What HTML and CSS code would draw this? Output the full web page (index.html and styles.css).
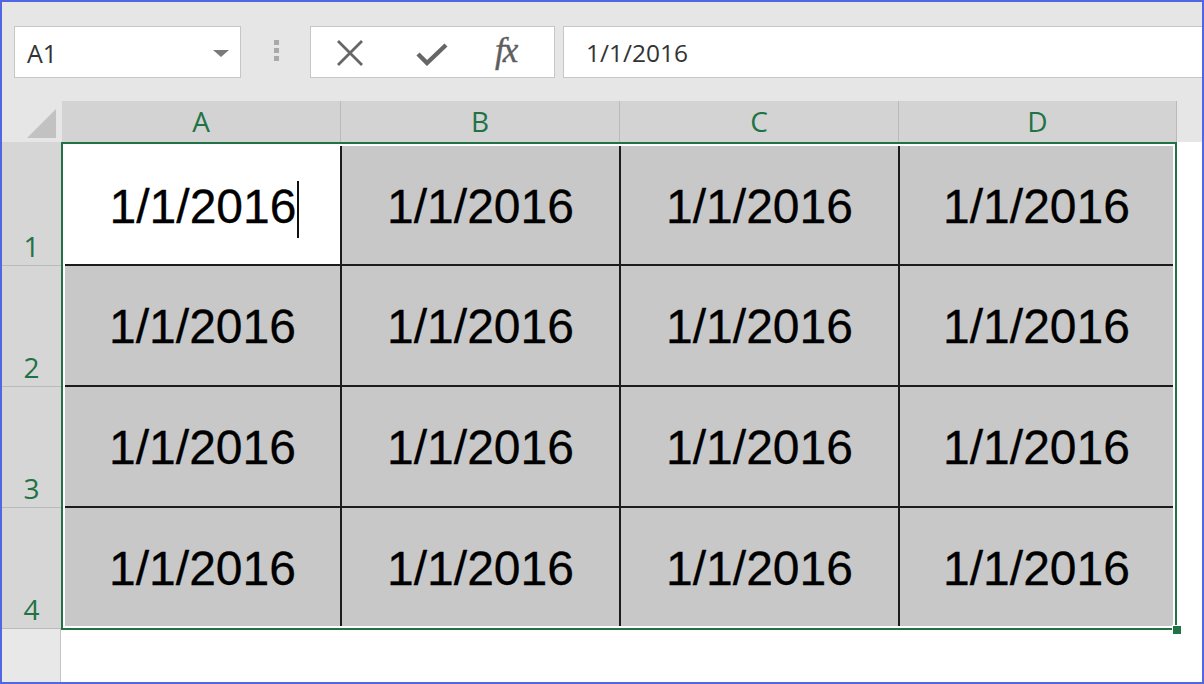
FILE: index.html
```html
<!DOCTYPE html>
<html>
<head>
<meta charset="utf-8">
<link rel="stylesheet" href="styles.css">
</head>
<body>
<div class="frame">
  <div class="toolbar">
    <div class="namebox">
      <span class="nb-text">A1</span>
      <svg class="nb-arrow" width="18" height="9" viewBox="0 0 18 9"><path d="M1 1 L17 1 L9 8 Z" fill="#7a7a7a"/></svg>
    </div>
    <div class="grip"><i></i><i></i><i></i></div>
    <div class="fbtns">
      <svg class="ic-x" width="28" height="26" viewBox="0 0 28 26"><path d="M2 1 L26 25 M26 1 L2 25" stroke="#666666" stroke-width="2.8" fill="none"/></svg>
      <svg class="ic-check" width="32" height="24" viewBox="0 0 32 24"><path d="M2 12 L11 21 L30 3" stroke="#666666" stroke-width="4.4" fill="none" stroke-linejoin="miter"/></svg>
      <span class="ic-fx">fx</span>
    </div>
    <div class="finput">1/1/2016</div>
  </div>
  <div class="sheet">
    <div class="colhdrs">
      <div class="corner"><svg width="30" height="30" viewBox="0 0 30 30"><path d="M0 29 L29 29 L29 0 Z" fill="#c2c2c2"/></svg></div>
      <div class="ch">A</div>
      <div class="ch">B</div>
      <div class="ch">C</div>
      <div class="ch last">D</div>
      <div class="ch-rest"></div>
    </div>
    <div class="body">
      <div class="rowhdrs">
        <div class="rh r1">1</div>
        <div class="rh">2</div>
        <div class="rh">3</div>
        <div class="rh">4</div>
        <div class="rh-rest"></div>
      </div>
      <div class="gridarea">
        <div class="sel">
          <div class="cells">
            <div class="cell active">1/1/2016<span class="caret"></span></div>
            <div class="cell">1/1/2016</div>
            <div class="cell">1/1/2016</div>
            <div class="cell">1/1/2016</div>
            <div class="cell">1/1/2016</div>
            <div class="cell">1/1/2016</div>
            <div class="cell">1/1/2016</div>
            <div class="cell">1/1/2016</div>
            <div class="cell">1/1/2016</div>
            <div class="cell">1/1/2016</div>
            <div class="cell">1/1/2016</div>
            <div class="cell">1/1/2016</div>
            <div class="cell">1/1/2016</div>
            <div class="cell">1/1/2016</div>
            <div class="cell">1/1/2016</div>
            <div class="cell">1/1/2016</div>
          </div>
          <div class="handle"></div>
        </div>
      </div>
    </div>
  </div>
</div>
</body>
</html>
```
FILE: styles.css
```css
* { box-sizing: border-box; }
html, body { margin: 0; padding: 0; background: #ffffff; }
.frame {
  width: 1204px;
  height: 684px;
  border: 2px solid #5066e3;
  background: #ffffff;
  overflow: hidden;
  display: flex;
  flex-direction: column;
}
.toolbar {
  height: 99px;
  flex: none;
  background: #e6e6e6;
  display: flex;
  align-items: flex-start;
  padding: 24px 0 0 12px;
  font-family: "Open Sans", "Noto Sans", sans-serif;
}
.namebox {
  width: 227px;
  height: 52px;
  background: #ffffff;
  border: 1px solid #c6c6c6;
  display: flex;
  align-items: center;
  justify-content: space-between;
  padding: 0 10px 0 12px;
}
.nb-text { font-size: 25px; color: #333333; line-height: 1; padding-top: 2px; }
.nb-arrow { margin-top: 2px; }
.grip {
  margin-left: 33px;
  width: 6px;
  display: flex;
  flex-direction: column;
  gap: 3px;
  padding-top: 14px;
}
.grip i { display: block; width: 5px; height: 5px; background: #a9a9a9; }
.fbtns {
  margin-left: 30px;
  width: 245px;
  height: 52px;
  background: #ffffff;
  border: 1px solid #c6c6c6;
  display: flex;
  align-items: center;
  padding-left: 25px;
}
.ic-x { margin-top: 1px; }
.ic-check { margin-left: 52px; margin-top: 3px; }
.ic-fx {
  margin-left: 47px;
  font-family: "Liberation Serif", "DejaVu Serif", serif;
  font-style: italic;
  font-size: 35px;
  color: #5e5e5e;
  line-height: 1;
  margin-top: -4px;
  letter-spacing: -2px;
  -webkit-text-stroke: 0.4px #5e5e5e;
}
.finput {
  margin-left: 8px;
  flex: 1;
  height: 52px;
  background: #ffffff;
  border: 1px solid #c6c6c6;
  border-right: none;
  font-size: 24.5px;
  color: #333333;
  display: flex;
  align-items: center;
  padding: 1px 0 0 22px;
}
.sheet {
  flex: 1;
  display: flex;
  flex-direction: column;
  font-family: "Open Sans", "Noto Sans", sans-serif;
}
.colhdrs {
  height: 41px;
  flex: none;
  display: flex;
}
.corner {
  width: 60px;
  background: #e6e6e6;
  display: flex;
  align-items: flex-end;
  justify-content: flex-end;
  padding: 0 5px 3px 0;
}
.ch {
  width: 279px;
  background: #d3d3d3;
  border-right: 1px solid #bababa;
  color: #217346;
  font-size: 28px;
  text-align: center;
  line-height: 41px;
  padding-top: 0px;
}
.ch.last { width: 278px; }
.ch-rest { flex: 1; background: #e6e6e6; }
.body {
  flex: 1;
  display: flex;
}
.rowhdrs {
  width: 59px;
  flex: none;
  display: flex;
  flex-direction: column;
}
.rh {
  height: 121px;
  background: #d6d6d6;
  border-bottom: 1px solid #bababa;
  color: #217346;
  font-size: 28px;
  line-height: 28px;
  display: flex;
  align-items: flex-end;
  justify-content: center;
  padding: 0 0 5px 0;
}
.rh.r1 { height: 124px; }
.rh-rest {
  flex: 1;
  background: #e8e8e8;
  border-right: 1px solid #c4c4c4;
}
.gridarea {
  flex: 1;
  background: #ffffff;
}
.sel {
  position: relative;
  width: 1116px;
  height: 488px;
  border: 2px solid #217346;
  padding: 2px;
  background: #ffffff;
}
.cells {
  width: 100%;
  height: 100%;
  display: grid;
  grid-template-columns: 275px 277px 277px 1fr;
  grid-template-rows: 118px 119px 119px 1fr;
  gap: 2px;
  background: #1c1c1c;
}
.cell {
  background: #c8c8c8;
  font-family: "Liberation Sans", Arial, sans-serif;
  font-size: 48px;
  color: #000000;
  -webkit-text-stroke: 0.3px #000000;
  display: flex;
  align-items: center;
  justify-content: center;
  padding-top: 2px;
}
.cell.active { background: #ffffff; padding-left: 4px; }
.caret {
  display: inline-block;
  width: 2px;
  height: 57px;
  background: #111111;
  margin-left: 1px;
  margin-top: 6px;
}
.handle {
  position: absolute;
  right: -7px;
  bottom: -7px;
  width: 10px;
  height: 10px;
  background: #217346;
  border: 1px solid #ffffff;
}
```
